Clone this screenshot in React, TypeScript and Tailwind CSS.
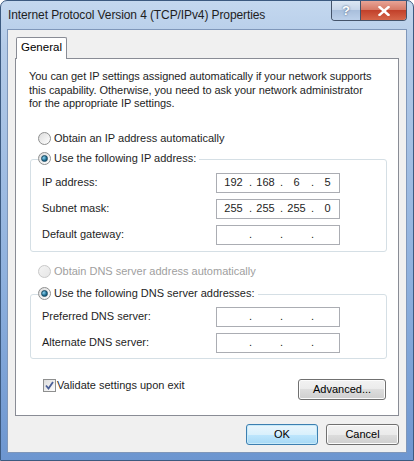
import React from "react";

const font = "font-['Segoe_UI','Liberation_Sans',Arial,sans-serif]";

function Radio({ checked, disabled }: { checked?: boolean; disabled?: boolean }) {
  return (
    <span
      className={`flex h-[13px] w-[13px] shrink-0 items-center justify-center rounded-full border ${
        disabled
          ? "border-[#c8c8c8] bg-[linear-gradient(135deg,#f4f4f4,#e6e6e6)]"
          : "border-[#8e8f8f] bg-[linear-gradient(135deg,#dcdcdc,#ffffff)]"
      }`}
    >
      {checked && (
        <span className="h-[7px] w-[7px] rounded-full border border-[#1b4b63] bg-[radial-gradient(circle_at_35%_35%,#8fd4f0,#1a6a8f_60%,#103f55)]" />
      )}
    </span>
  );
}

function IpBox({ parts }: { parts: string[] }) {
  return (
    <div className="grid h-[20px] w-[124px] grid-cols-[31px_2px_29px_2px_29px_2px_29px] items-center border border-[#abadb3] bg-white pl-[1px] text-[11px] text-[#1e1e1e]">
      {parts.map((p, i) => (
        <React.Fragment key={i}>
          <span className="text-center">{p}</span>
          {i < 3 && <span className="text-center leading-none">.</span>}
        </React.Fragment>
      ))}
    </div>
  );
}

function Field({ label, parts }: { label: string; parts: string[] }) {
  return (
    <div className="flex h-[20px] items-center">
      <span className="w-[174px]">{label}</span>
      <IpBox parts={parts} />
    </div>
  );
}

function Button({ children, def, className = "" }: { children: React.ReactNode; def?: boolean; className?: string }) {
  return (
    <button
      className={`flex items-center justify-center rounded-[3px] border text-[11px] text-black ${
        def
          ? "border-[#3c7fb1] bg-[linear-gradient(#eaf6fd_0%,#d9f0fc_50%,#bee6fd_50%,#a7d9f5_100%)] shadow-[inset_0_0_0_1px_#c8eaf9]"
          : "border-[#707070] bg-[linear-gradient(#f2f2f2_0%,#ebebeb_50%,#dddddd_50%,#cfcfcf_100%)] shadow-[inset_0_0_0_1px_#fcfcfc]"
      } ${className}`}
    >
      {children}
    </button>
  );
}

export default function App() {
  return (
    <div
      className={`${font} flex h-[461px] w-[414px] flex-col overflow-hidden rounded-t-[7px] border border-[#3c5a80] bg-[linear-gradient(180deg,#c4d8ef_0%,#b4cbe8_10%,#8fb1de_60%,#6d96d0_100%)] text-[11px] text-black`}
    >
      {/* title bar */}
      <div className="flex h-[28px] shrink-0 items-start">
        <div className="flex h-full flex-1 items-center pl-[7px] text-[12px] tracking-[-0.1px] text-[#1e1e1e]">
          Internet Protocol Version 4 (TCP/IPv4) Properties
        </div>
        <div className="mr-[6px] flex h-[20px] overflow-hidden rounded-b-[4px] border border-t-0 border-[#44536a]">
          <div className="flex w-[29px] items-center justify-center border-r border-[#44536a] bg-[linear-gradient(#dbe6f3_0%,#c7d6ea_45%,#a9bfdc_50%,#bcd0ea_100%)] text-[13px] font-bold text-white [text-shadow:0_0_2px_#2f4a70]">
            ?
          </div>
          <div className="flex w-[45px] items-center justify-center bg-[linear-gradient(#e8a496_0%,#d77b68_45%,#c2412b_50%,#d6664a_100%)]">
            <svg width="12" height="10" viewBox="0 0 12 10">
              <path d="M1.5 1 L10.5 9 M10.5 1 L1.5 9" stroke="#fff" strokeWidth="2.4" strokeLinecap="square" />
            </svg>
          </div>
        </div>
      </div>

      {/* client area */}
      <div className="mx-[6px] mb-[7px] flex flex-1 flex-col border border-[#7f97ba] bg-[#f0f0f0] px-[7px] pt-[7px]">
        {/* tab */}
        <div className="flex">
          <div className="z-10 ml-[1px] -mb-[1px] flex h-[22px] w-[51px] items-center justify-center rounded-t-[2px] border border-b-0 border-[#898c95] bg-white pb-[1px] text-[11.5px]">
            General
          </div>
        </div>
        <div className="flex h-[358px] flex-col border border-[#898c95] bg-white pl-[13px] pr-[11px] pt-[11px] text-[#1e1e1e]">
          <p className="whitespace-nowrap leading-[13.5px] tracking-[-0.05px]">
            You can get IP settings assigned automatically if your network supports
            <br />
            this capability. Otherwise, you need to ask your network administrator
            <br />
            for the appropriate IP settings.
          </p>

          <div className="mt-[21px] flex h-[14px] items-center gap-[3px] pl-[9px]">
            <Radio />
            <span>Obtain an IP address automatically</span>
          </div>

          <div className="mt-[13px] ml-[1px] rounded-[3px] border border-[#d5dfe5] pb-[6px]">
            <div className="-mt-[8px] ml-[7px] flex h-[14px] w-fit items-center gap-[3px] bg-white pr-[3px]">
              <Radio checked />
              <span>Use the following IP address:</span>
            </div>
            <div className="mt-[7px] flex flex-col gap-[6px] pl-[11px]">
              <Field label="IP address:" parts={["192", "168", "6", "5"]} />
              <Field label="Subnet mask:" parts={["255", "255", "255", "0"]} />
              <Field label="Default gateway:" parts={["", "", "", ""]} />
            </div>
          </div>

          <div className="mt-[13px] flex h-[14px] items-center gap-[3px] pl-[9px] text-[#a0a0a0]">
            <Radio disabled />
            <span>Obtain DNS server address automatically</span>
          </div>

          <div className="mt-[15px] ml-[1px] rounded-[3px] border border-[#d5dfe5] pb-[5px]">
            <div className="-mt-[8px] ml-[7px] flex h-[14px] w-fit items-center gap-[3px] bg-white pr-[3px]">
              <Radio checked />
              <span>Use the following DNS server addresses:</span>
            </div>
            <div className="mt-[6px] flex flex-col gap-[6px] pl-[11px]">
              <Field label="Preferred DNS server:" parts={["", "", "", ""]} />
              <Field label="Alternate DNS server:" parts={["", "", "", ""]} />
            </div>
          </div>

          <div className="mt-[20px] flex items-start justify-between pr-[1px]">
            <div className="flex h-[14px] items-center gap-[1px] pl-[14px]">
              <span className="flex h-[13px] w-[13px] items-center justify-center border border-[#8e8f8f] bg-[linear-gradient(135deg,#dcdcdc,#ffffff)]">
                <svg width="9" height="9" viewBox="0 0 9 9">
                  <path d="M1 4.5 L3.5 7.5 L8 1" fill="none" stroke="#4a5f97" strokeWidth="1.8" />
                </svg>
              </span>
              <span>Validate settings upon exit</span>
            </div>
            <Button className="h-[21px] w-[88px]">Advanced...</Button>
          </div>
        </div>

        <div className="mt-[8px] flex justify-end gap-[8px]">
          <Button def className="h-[21px] w-[72px]">OK</Button>
          <Button className="h-[21px] w-[73px]">Cancel</Button>
        </div>
      </div>
    </div>
  );
}
